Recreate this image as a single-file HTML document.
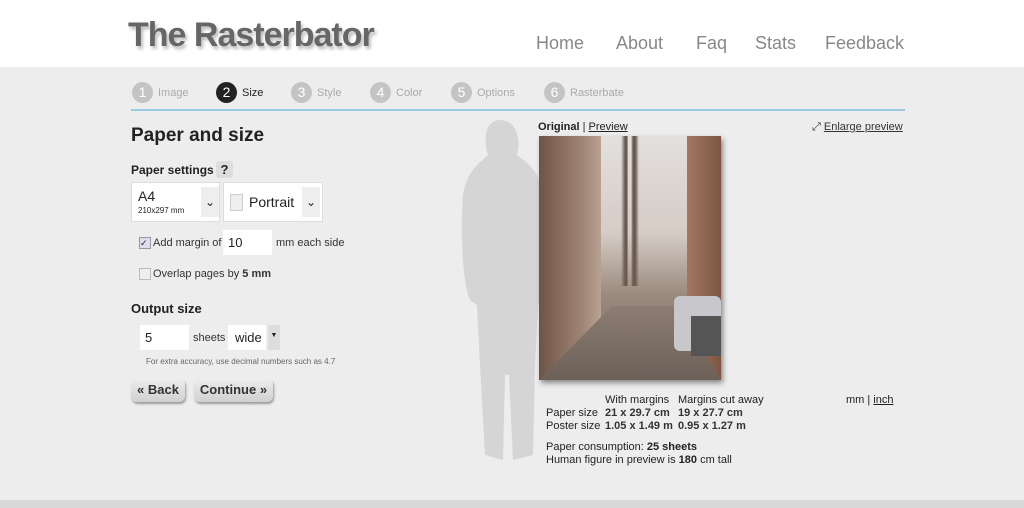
<!DOCTYPE html>
<html><head><style>
body{margin:0;width:1024px;height:508px;background:#ededed;font-family:"Liberation Sans",sans-serif;position:relative;overflow:hidden;color:#222}
.hdr{position:absolute;left:0;top:0;width:1024px;height:67px;background:#fff}
.logo{position:absolute;left:128px;top:16px;font-size:34px;font-weight:bold;color:#666;letter-spacing:-1px;text-shadow:2px 3px 3px #bbb}
.nav{position:absolute;top:33px;font-size:18px;color:#888}
.step{position:absolute;top:82px;font-size:11px;color:#aaa;display:flex;align-items:center}
.step b{display:inline-block;width:21px;height:21px;border-radius:50%;background:#c4c4c4;color:#fff;font-weight:normal;font-size:14px;text-align:center;line-height:21px;margin-right:5px}
.a{position:absolute}
.box{position:absolute;background:#fff;border:1px solid #ddd}
.btn{position:absolute;top:378px;height:24px;background:linear-gradient(#eee,#d0d0d0);border-radius:6px;box-shadow:1px 2px 2px #999;font-size:13px;font-weight:bold;line-height:24px;text-align:center;color:#333}
.sm{font-size:11px;color:#333}
</style></head><body>
<div class="hdr"></div>
<div class="logo">The Rasterbator</div>
<div class="nav" style="left:536px">Home</div>
<div class="nav" style="left:616px">About</div>
<div class="nav" style="left:696px">Faq</div>
<div class="nav" style="left:755px">Stats</div>
<div class="nav" style="left:825px">Feedback</div>
<div class="step" style="left:132px"><b>1</b>Image</div>
<div class="step" style="left:216px;color:#222"><b style="background:#222">2</b>Size</div>
<div class="step" style="left:291px"><b>3</b>Style</div>
<div class="step" style="left:370px"><b>4</b>Color</div>
<div class="step" style="left:451px"><b>5</b>Options</div>
<div class="step" style="left:544px"><b>6</b>Rasterbate</div>
<div class="a" style="left:131px;top:109px;width:774px;height:2px;background:#9ccbe0"></div>
<svg class="a" style="left:455px;top:115px" width="95" height="350"><path d="M45 5 C30 5 28 25 33 40 C25 48 12 55 8 80 C5 120 8 170 15 185 L22 190 L25 250 L30 340 L48 345 L50 260 L54 260 L58 345 L78 340 L80 250 L83 190 L88 185 C92 150 92 100 88 80 C85 55 72 48 62 40 C66 25 62 5 45 5Z" fill="#d5d5d5"/></svg>
<div class="a" style="left:131px;top:125px;font-size:19px;font-weight:bold">Paper and size</div>
<div class="a" style="left:131px;top:163px;font-size:12px;font-weight:bold">Paper settings</div>
<div class="a" style="left:216px;top:161px;width:17px;height:17px;background:#ddd;border-radius:3px;font-size:13px;font-weight:bold;text-align:center;line-height:17px">?</div>
<div class="box" style="left:131px;top:182px;width:87px;height:38px"><div style="position:absolute;left:6px;top:5px;font-size:14px">A4</div><div style="position:absolute;left:6px;top:23px;font-size:8px">210x297 mm</div><div style="position:absolute;right:0;top:4px;width:18px;height:30px;background:#eee;text-align:center;font-size:12px;line-height:30px">⌄</div></div>
<div class="box" style="left:223px;top:182px;width:98px;height:38px"><div style="position:absolute;left:6px;top:11px;width:11px;height:15px;border:1px solid #ccc;background:#eee"></div><div style="position:absolute;left:25px;top:11px;font-size:14px">Portrait</div><div style="position:absolute;right:2px;top:4px;width:18px;height:30px;background:#eee;text-align:center;font-size:12px;line-height:30px">⌄</div></div>
<div class="a" style="left:139px;top:237px;width:10px;height:10px;border:1px solid #999;background:#dde;font-size:9px;line-height:10px">✓</div>
<div class="a sm" style="left:153px;top:237px">Add margin of</div>
<div class="box" style="left:223px;top:230px;width:49px;height:25px;border:none;font-size:13px;line-height:25px;text-indent:5px">10</div>
<div class="a sm" style="left:276px;top:237px">mm each side</div>
<div class="a" style="left:139px;top:268px;width:10px;height:10px;border:1px solid #bbb;background:#eee"></div>
<div class="a sm" style="left:153px;top:268px">Overlap pages by <b>5 mm</b></div>
<div class="a" style="left:131px;top:301px;font-size:13px;font-weight:bold">Output size</div>
<div class="box" style="left:140px;top:325px;width:49px;height:25px;border:none;font-size:13px;line-height:25px;text-indent:5px">5</div>
<div class="a sm" style="left:193px;top:332px">sheets</div>
<div class="box" style="left:228px;top:325px;width:38px;height:25px;border:none;font-size:13px;line-height:25px;text-indent:7px">wide</div>
<div class="a" style="left:268px;top:325px;width:12px;height:25px;background:#ddd;font-size:7px;text-align:center;line-height:22px">▼</div>
<div class="a" style="left:146px;top:357px;font-size:8px;color:#666">For extra accuracy, use decimal numbers such as 4.7</div>
<div class="btn" style="left:131px;width:54px">« Back</div>
<div class="btn" style="left:194px;width:79px">Continue »</div>
<div class="a sm" style="left:538px;top:121px;color:#222"><b>Original</b> | <u>Preview</u></div>
<div class="a sm" style="left:812px;top:121px">⤢ <u>Enlarge preview</u></div>
<div class="a" style="left:539px;top:136px;width:182px;height:244px;box-shadow:2px 3px 5px #888;overflow:hidden;background:linear-gradient(#e3e0de 0%,#d5ccc5 40%,#9a8a7e 65%,#7d6d62 100%)">
<div class="a" style="left:0;top:0;width:62px;height:244px;background:linear-gradient(90deg,#6f5445,#a18574 70%,#b9a293)"></div>
<div class="a" style="left:148px;top:0;width:34px;height:244px;background:linear-gradient(90deg,#a37760,#7c5543)"></div>
<div class="a" style="left:70px;top:0;width:40px;height:150px;background:linear-gradient(90deg,transparent 30%,#6a5a52 40%,#6a5a52 45%,transparent 48%,transparent 55%,#6a5a52 60%,#6a5a52 66%,transparent 75%)"></div>
<div class="a" style="left:0;top:170px;width:182px;height:74px;background:linear-gradient(#8b7d73,#6d6058);clip-path:polygon(40% 0,75% 0,100% 100%,0 100%)"></div>
<div class="a" style="left:135px;top:160px;width:47px;height:55px;background:#c8c8cc;border-radius:6px"></div>
<div class="a" style="left:152px;top:180px;width:30px;height:40px;background:#555"></div>
</div>
<div class="a" style="left:605px;top:394px;font-size:11px">With margins</div>
<div class="a" style="left:678px;top:394px;font-size:11px">Margins cut away</div>
<div class="a" style="left:846px;top:394px;font-size:11px">mm | <u>inch</u></div>
<div class="a" style="left:546px;top:407px;font-size:11px;line-height:13px">Paper size<br>Poster size</div>
<div class="a" style="left:605px;top:407px;font-size:11px;line-height:13px;font-weight:bold;color:#333">21 x 29.7 cm<br>1.05 x 1.49 m</div>
<div class="a" style="left:678px;top:407px;font-size:11px;line-height:13px;font-weight:bold;color:#333">19 x 27.7 cm<br>0.95 x 1.27 m</div>
<div class="a" style="left:546px;top:441px;font-size:11px;line-height:13px">Paper consumption: <b>25 sheets</b><br>Human figure in preview is <b>180</b> cm tall</div>
<div class="a" style="left:0;top:500px;width:1024px;height:8px;background:#d8d8d8"></div>
</body></html>
